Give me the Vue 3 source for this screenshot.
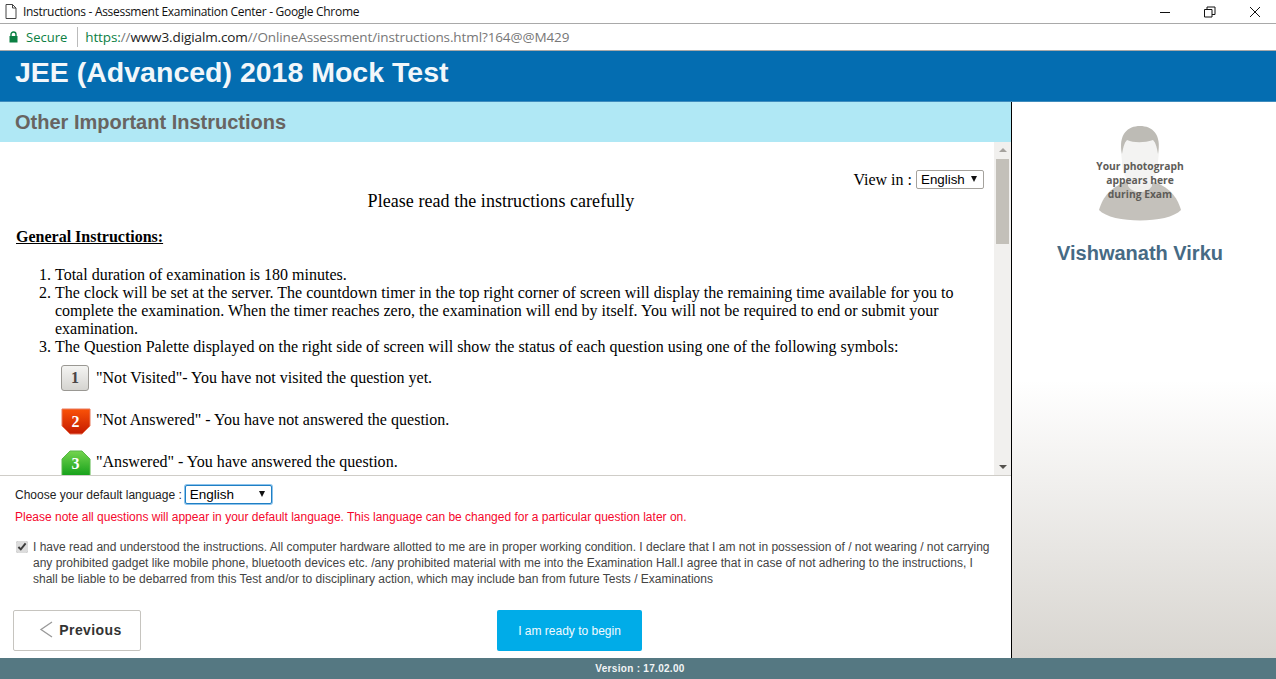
<script setup>
import { ref } from 'vue';

const agreed = ref(true);

const symbols = [
  { id: 1, kind: 'grey', text: '"Not Visited"- You have not visited the question yet.' },
  { id: 2, kind: 'red', text: '"Not Answered" - You have not answered the question.' },
  { id: 3, kind: 'green', text: '"Answered" - You have answered the question.' },
];
</script>

<template>
  <div class="page">
    <div class="titlebar">
      <svg class="doc-icon" width="12" height="15" viewBox="0 0 12 15">
        <path d="M1 .5h6.500L11 4v10.500H1zM7.500.5V4H11" fill="#fff" stroke="#444" />
      </svg>
      <span class="title">Instructions - Assessment Examination Center - Google Chrome</span>
      <div class="win-controls">
        <svg width="12" height="12" viewBox="0 0 12 12"><path d="M1 6.500h10" stroke="#111" fill="none" /></svg>
        <svg width="12" height="12" viewBox="0 0 12 12"><path d="M.5 3.500h7.500v7.500H.5zM3 3.500V1h8v7.500H8" stroke="#111" fill="none" /></svg>
        <svg width="12" height="12" viewBox="0 0 12 12"><path d="M1 1l10 10M11 1L1 11" stroke="#111" fill="none" /></svg>
      </div>
    </div>

    <div class="urlbar">
      <svg width="9" height="12" viewBox="0 0 9 12">
        <path d="M2 5V3.500a2.500 2.500 0 0 1 5 0V5" fill="none" stroke="#0b8043" stroke-width="1.400" />
        <rect x="0.500" y="5" width="8" height="6.500" fill="#0b8043" />
      </svg>
      <span class="secure">Secure</span>
      <span class="url"><span class="url-green">https:</span><span class="url-grey">//</span><span class="url-host">www3.digialm.com</span><span class="url-grey">//OnlineAssessment/instructions.html?164@@M429</span></span>
    </div>

    <header class="banner">JEE (Advanced) 2018 Mock Test</header>

    <div class="main">
      <section class="left">
        <h2 class="heading">Other Important Instructions</h2>

        <div class="scroll-wrap">
          <div class="content">
            <div class="view-in">
              View in :
              <span class="fake-select small">English<i class="arrow"></i></span>
            </div>
            <p class="read">Please read the instructions carefully</p>
            <p class="general">General Instructions:</p>
            <ol class="list">
              <li>Total duration of examination is 180 minutes.</li>
              <li>The clock will be set at the server. The countdown timer in the top right corner of screen will display the remaining time available for you to complete the examination. When the timer reaches zero, the examination will end by itself. You will not be required to end or submit your examination.</li>
              <li>The Question Palette displayed on the right side of screen will show the status of each question using one of the following symbols:</li>
            </ol>
            <div class="symbols">
              <div v-for="s in symbols" :key="s.id" class="symbol-row">
                <span v-if="s.kind === 'grey'" class="badge badge--grey">{{ s.id }}</span>
                <svg v-else-if="s.kind === 'red'" class="badge-svg" width="30" height="27" viewBox="0 0 30 27">
                  <defs>
                    <linearGradient id="red-fill" x1="0" y1="0" x2="0" y2="1">
                      <stop offset="0" stop-color="#fa5208" />
                      <stop offset="1" stop-color="#c41a00" />
                    </linearGradient>
                  </defs>
                  <polygon points="1,1 29,1 29,18 21,26 9,26 1,18" fill="url(#red-fill)" stroke="#e8785a" />
                  <text x="14.500" y="19" text-anchor="middle" class="badge-num">{{ s.id }}</text>
                </svg>
                <svg v-else class="badge-svg" width="30" height="27" viewBox="0 0 30 27">
                  <defs>
                    <linearGradient id="green-fill" x1="0" y1="0" x2="0" y2="1">
                      <stop offset="0" stop-color="#74d44e" />
                      <stop offset="1" stop-color="#14a01a" />
                    </linearGradient>
                  </defs>
                  <polygon points="9,1 21,1 29,9 29,26 1,26 1,9" fill="url(#green-fill)" stroke="#58b848" />
                  <text x="14.500" y="19" text-anchor="middle" class="badge-num">{{ s.id }}</text>
                </svg>
                <span>{{ s.text }}</span>
              </div>
            </div>
          </div>
          <div class="scrollbar">
            <i class="sb-up"></i>
            <i class="sb-thumb"></i>
            <i class="sb-down"></i>
          </div>
        </div>

        <div class="lang">
          <div class="lang-row">
            Choose your default language :
            <span class="fake-select focus">English<i class="arrow"></i></span>
          </div>
          <p class="note">Please note all questions will appear in your default language. This language can be changed for a particular question later on.</p>
          <label class="agree">
            <input v-model="agreed" type="checkbox" class="check" />
            <span>I have read and understood the instructions. All computer hardware allotted to me are in proper working condition. I declare that I am not in possession of / not wearing / not carrying any prohibited gadget like mobile phone, bluetooth devices etc. /any prohibited material with me into the Examination Hall.I agree that in case of not adhering to the instructions, I shall be liable to be debarred from this Test and/or to disciplinary action, which may include ban from future Tests / Examinations</span>
          </label>
        </div>

        <div class="actions">
          <button class="prev" type="button">
            <svg width="14" height="17" viewBox="0 0 14 17"><path d="M13 1L2 8.500 13 16" fill="none" stroke="#999" stroke-width="1.300" /></svg>
            Previous
          </button>
          <button class="begin" type="button">I am ready to begin</button>
        </div>
      </section>

      <aside class="right">
        <div class="photo">
          <svg width="84" height="96" viewBox="0 0 84 96">
            <path d="M1 84C4 74 10 62 28 56h28c18 6 24 18 27 28-13 14-69 14-82 0z" fill="#c4c1bb" />
            <path d="M30 40h24v20c-5 8-19 8-24 0z" fill="#efefed" />
            <path d="M23 26C22 8 30 1 42 1s20 7 19 25l-1 10c0 16-10 24-18 24s-18-8-18-24z" fill="#f3f3f2" />
            <path d="M24 28C20 8 30 0 42 0s22 8 18 28c-1-6-2-11-5-14-9 3-19 3-26 0-3 3-4 8-5 14z" fill="#bdbbb5" />
          </svg>
          <div class="photo-text">Your photograph<br />appears here<br />during Exam</div>
        </div>
        <div class="name">Vishwanath Virku</div>
      </aside>
    </div>

    <footer class="footer">Version : 17.02.00</footer>
  </div>
</template>

<style>
html, body {
  margin: 0;
  overflow: hidden;
}
</style>

<style scoped>
.page {
  width: 1276px;
  height: 679px;
  display: flex;
  flex-direction: column;
  overflow: hidden;
  background: #fff;
  font-family: "Liberation Sans", Arial, sans-serif;
}

.titlebar {
  height: 23px;
  flex: none;
  display: flex;
  align-items: center;
  padding-left: 5px;
  border-bottom: 1px solid #a9a9a9;
  font-family: "Open Sans", "Noto Sans", sans-serif;
  font-size: 12px;
  color: #111;
}

.doc-icon {
  margin-right: 6px;
}

.title {
  letter-spacing: -0.3px;
}

.win-controls {
  margin-left: auto;
  display: flex;
  gap: 33px;
  padding-right: 15px;
}

.urlbar {
  height: 26px;
  flex: none;
  display: flex;
  align-items: center;
  padding-left: 9px;
  border-bottom: 1px solid #a9a9a9;
  font-family: "Open Sans", "Noto Sans", sans-serif;
  font-size: 13.5px;
}

.url {
  margin-left: -1px;
  letter-spacing: -0.11px;
}

.secure {
  margin-left: 8px;
  padding-right: 10px;
  margin-right: 8px;
  border-right: 1px solid #bbb;
  line-height: 20px;
  color: #0b8043;
  font-size: 13px;
}

.url-green {
  color: #0b8043;
}

.url-grey {
  color: #777;
}

.url-host {
  color: #222;
}

.banner {
  height: 51px;
  flex: none;
  box-sizing: border-box;
  padding: 4px 0 0 15px;
  background: #046db1;
  border-bottom: 1px solid #3f8cbd;
  color: #f2f7fa;
  font-size: 28.5px;
  line-height: 35px;
  font-weight: 700;
}

.main {
  flex: 1;
  min-height: 0;
  display: flex;
}

.left {
  width: 1011px;
  flex: none;
  display: flex;
  flex-direction: column;
}

.heading {
  margin: 0;
  height: 40px;
  flex: none;
  box-sizing: border-box;
  padding-left: 15px;
  background: #b0e8f5;
  color: #686461;
  font-size: 20px;
  line-height: 40px;
  font-weight: 700;
}

.scroll-wrap {
  height: 334px;
  flex: none;
  display: flex;
  overflow: hidden;
  border-bottom: 1px solid #cfcdc8;
  box-sizing: border-box;
}

.content {
  flex: 1;
  min-width: 0;
  padding: 0 16px;
  font-family: "Liberation Serif", "Times New Roman", serif;
  font-size: 16px;
  line-height: 18px;
  color: #000;
}

.view-in {
  display: flex;
  justify-content: flex-end;
  align-items: center;
  gap: 4px;
  margin: 28px -6px 0 0;
}

.read {
  margin: 2px 0 0;
  padding-left: 8px;
  text-align: center;
  font-size: 18px;
  line-height: 21px;
  letter-spacing: 0.05px;
}

.general {
  margin: 15px 0 0;
  font-weight: 700;
  text-decoration: underline;
  line-height: 20px;
}

.list {
  margin: 19px 20px 0 0;
  padding-left: 39px;
}

.symbols {
  padding-left: 45px;
  margin-top: 8px;
  display: flex;
  flex-direction: column;
  gap: 14px;
  letter-spacing: 0.015px;
}

.symbol-row {
  display: flex;
  align-items: center;
  gap: 7px;
  height: 28px;
}

.badge {
  width: 28px;
  height: 26px;
  box-sizing: border-box;
  display: flex;
  align-items: center;
  justify-content: center;
  font-weight: 700;
  font-size: 16px;
  flex: none;
}

.badge--grey {
  background: linear-gradient(#f4f4f2, #d5d4d0);
  border: 1px solid #9a9893;
  border-radius: 3px;
  color: #4a4646;
}

.badge-svg {
  flex: none;
  margin: 3px -2px 0 0;
}

.badge-num {
  font: 700 16px "Liberation Serif", "Times New Roman", serif;
  fill: #fff;
}

.fake-select {
  position: relative;
  box-sizing: border-box;
  display: inline-block;
  background: #fff;
  color: #000;
  font-family: "Liberation Sans", Arial, sans-serif;
  font-size: 13.33px;
}

.fake-select.small {
  width: 68px;
  height: 19px;
  line-height: 17px;
  padding-left: 4px;
  border: 1px solid #a5a29d;
  border-radius: 2px;
}

.fake-select.focus {
  width: 87px;
  height: 19px;
  line-height: 17px;
  padding-left: 4px;
  border: 1px solid #1f7fc4;
  border-radius: 2px;
  box-shadow: 0 0 0 1px #8cc3ec;
  font-size: 13.5px;
}

.arrow {
  position: absolute;
  right: 6px;
  top: 5px;
  width: 0;
  height: 0;
  border-left: 3.500px solid transparent;
  border-right: 3.500px solid transparent;
  border-top: 6px solid #111;
}

.scrollbar {
  width: 17px;
  flex: none;
  background: #f1f0ee;
  position: relative;
}

.sb-thumb {
  position: absolute;
  top: 17px;
  left: 2px;
  width: 13px;
  height: 85px;
  background: #c3c0b9;
}

.sb-up,
.sb-down {
  position: absolute;
  left: 5px;
  width: 0;
  height: 0;
  border-left: 4px solid transparent;
  border-right: 4px solid transparent;
}

.sb-up {
  top: 6px;
  border-bottom: 4px solid #a5a29d;
}

.sb-down {
  bottom: 6px;
  border-top: 4px solid #55524e;
}

.lang {
  padding: 9px 20px 0 15px;
  font-size: 12px;
  color: #222;
}

.lang-row {
  display: flex;
  align-items: center;
  gap: 3px;
  height: 19px;
}

.note {
  margin: 5px 0 0;
  color: #f5072d;
  font-size: 12px;
  line-height: 16px;
}

.agree {
  display: flex;
  gap: 5px;
  margin-top: 14px;
  line-height: 16px;
  color: #444;
}

.check {
  margin: 2px 0 0 1px;
  width: 12px;
  height: 12px;
  flex: none;
  accent-color: #dcdcdc;
}

.actions {
  margin-top: auto;
  height: 48px;
  flex: none;
  display: flex;
  align-items: flex-start;
  padding-left: 13px;
}

.prev {
  width: 128px;
  height: 41px;
  display: flex;
  align-items: center;
  justify-content: center;
  gap: 6px;
  background: #fff;
  border: 1px solid #c6c4bf;
  border-radius: 2px;
  font: 700 14px "Liberation Sans", Arial, sans-serif;
  letter-spacing: 0.4px;
  color: #333;
  padding: 0 0 2px 7px;
}

.begin {
  margin-left: 356px;
  width: 145px;
  height: 41px;
  background: #00ace8;
  border: 0;
  border-radius: 2px;
  color: #f2fafe;
  font: 12px "Liberation Sans", Arial, sans-serif;
  padding: 0;
}

.right {
  flex: 1;
  border-left: 1px solid #000;
  padding-right: 8px;
  background: linear-gradient(#fff 278px, #d8d5d0);
  text-align: center;
}

.photo {
  position: relative;
  width: 84px;
  height: 96px;
  margin: 24px auto 0;
}

.photo-text {
  position: absolute;
  left: -10px;
  right: -10px;
  top: 33px;
  font: 700 10.300px/14px "Open Sans", "Noto Sans", sans-serif;
  color: #5e5c58;
}

.name {
  margin-top: 19px;
  color: #466a84;
  font-size: 20px;
  line-height: 24px;
  font-weight: 700;
}

.footer {
  height: 21px;
  flex: none;
  box-sizing: border-box;
  padding-left: 4px;
  background: #557882;
  color: #f2f5f6;
  font: 700 10px/21px "Liberation Sans", Arial, sans-serif;
  letter-spacing: 0.3px;
  text-align: center;
}
</style>
